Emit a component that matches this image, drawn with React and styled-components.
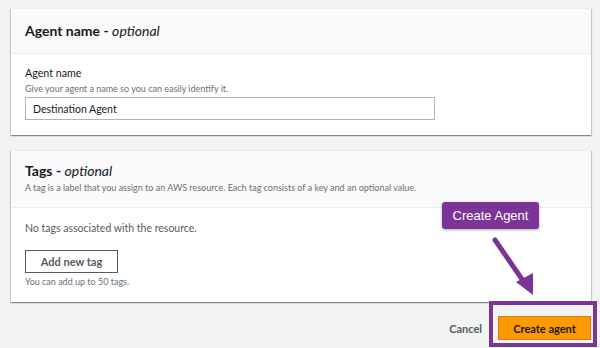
import React from "react";
import styled, { createGlobalStyle } from "styled-components";

const Global = createGlobalStyle`
  html, body {
    margin: 0;
    padding: 0;
    background: #f2f3f3;
  }
  body {
    font-family: Lato, "Open Sans", Arial, sans-serif;
    color: #16191f;
  }
`;

export default function App() {
  return (
    <Page>
      <Global />
      <Card>
        <Header>
          <Title>
            Agent name - <em>optional</em>
          </Title>
        </Header>
        <Body>
          <Label>Agent name</Label>
          <Hint>Give your agent a name so you can easily identify it.</Hint>
          <Input defaultValue="Destination Agent" />
        </Body>
      </Card>

      <Card $gap>
        <Header $tall>
          <Title>
            Tags - <em>optional</em>
          </Title>
          <Hint>
            A tag is a label that you assign to an AWS resource. Each tag
            consists of a key and an optional value.
          </Hint>
        </Header>
        <Body $tags>
          <Empty>No tags associated with the resource.</Empty>
          <NormalButton>Add new tag</NormalButton>
          <Hint $small>You can add up to 50 tags.</Hint>
        </Body>
      </Card>

      <Footer>
        <LinkButton>Cancel</LinkButton>
        <PrimaryButton>Create agent</PrimaryButton>
      </Footer>

      <Callout>Create Agent</Callout>
      <Arrow width="60" height="70" viewBox="0 0 60 70">
        <line
          x1="5"
          y1="5"
          x2="36"
          y2="50"
          stroke="#7b3597"
          strokeWidth="5"
          strokeLinecap="round"
        />
        <polygon points="26,47 43,60 43,38" fill="#7b3597" />
      </Arrow>
      <Highlight />
    </Page>
  );
}

const Page = styled.div`
  position: relative;
  width: 600px;
  height: 348px;
  padding: 8px 9px 0 11px;
  box-sizing: border-box;
  overflow: hidden;
`;

const Card = styled.section`
  background: #fff;
  margin-top: ${(p) => (p.$gap ? "15px" : "0")};
  box-shadow: 0 1px 1px 0 rgba(0, 28, 36, 0.3),
    1px 1px 1px 0 rgba(0, 28, 36, 0.15), -1px 1px 1px 0 rgba(0, 28, 36, 0.15);
  border-top: 1px solid #eaeded;
`;

const Header = styled.div`
  background: #fafafa;
  border-bottom: 1px solid #eaeded;
  padding: ${(p) => (p.$tall ? "11px 14px 12px" : "13px 14px 13px")};
`;

const Title = styled.h2`
  margin: 0;
  font-size: 14px;
  line-height: 18px;
  font-weight: 700;
  color: #16191f;

  em {
    font-weight: 400;
    font-style: italic;
  }
`;

const Body = styled.div`
  display: flex;
  flex-direction: column;
  align-items: flex-start;
  padding: ${(p) => (p.$tags ? "12px 14px 13px" : "11px 14px 15px")};
`;

const Label = styled.div`
  font-size: 10.7px;
  line-height: 16px;
  color: #16191f;
`;

const Hint = styled.div`
  font-size: 9px;
  line-height: 14px;
  color: #687078;
  margin-top: ${(p) => (p.$small ? "2px" : "1px")};
  white-space: nowrap;
`;

const Input = styled.input`
  width: 410px;
  height: 23px;
  box-sizing: border-box;
  margin-top: 1px;
  border: 1px solid #aab7b8;
  border-radius: 0;
  padding: 0 7px;
  font-family: inherit;
  font-size: 10.5px;
  color: #16191f;
  outline: none;
`;

const Empty = styled.div`
  font-size: 10.5px;
  line-height: 16px;
  color: #545b64;
`;

const NormalButton = styled.button`
  margin-top: 14px;
  width: 93px;
  height: 23px;
  border: 1px solid #545b64;
  background: #fff;
  font-family: inherit;
  font-weight: 700;
  font-size: 11px;
  color: #545b64;
  padding: 0;
`;

const Footer = styled.div`
  display: flex;
  justify-content: flex-end;
  align-items: center;
  gap: 16px;
  padding-top: 14px;
`;

const LinkButton = styled.button`
  background: none;
  border: none;
  padding: 0;
  font-family: inherit;
  font-weight: 700;
  font-size: 11px;
  color: #545b64;
`;

const PrimaryButton = styled.button`
  width: 93px;
  height: 24px;
  background: #ff9900;
  border: 1px solid #ec7211;
  font-family: inherit;
  font-weight: 700;
  font-size: 11px;
  color: #16191f;
  padding: 0;
`;

const Callout = styled.div`
  position: absolute;
  left: 442px;
  top: 202px;
  width: 97px;
  height: 27px;
  display: flex;
  align-items: center;
  justify-content: center;
  background: #7b3597;
  border-radius: 3px;
  box-shadow: 0 1px 3px rgba(0, 0, 0, 0.35);
  color: #fff;
  font-family: "Liberation Sans", Arial, sans-serif;
  font-size: 13px;
`;

const Arrow = styled.svg`
  position: absolute;
  left: 490px;
  top: 235px;
`;

const Highlight = styled.div`
  position: absolute;
  left: 489px;
  top: 301px;
  width: 108px;
  height: 46px;
  box-sizing: border-box;
  border: 4px solid #7b3597;
`;
